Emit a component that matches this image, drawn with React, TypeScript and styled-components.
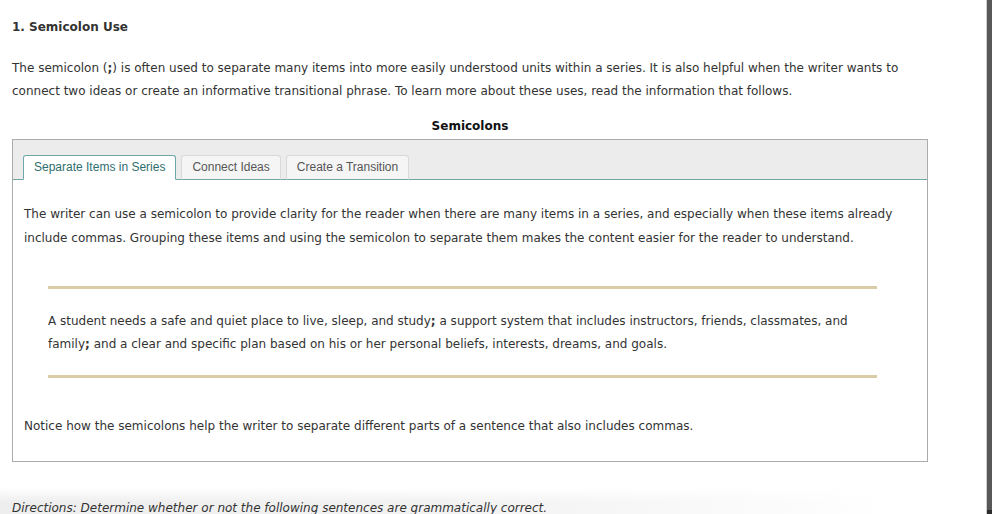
import React from "react";
import styled, { createGlobalStyle } from "styled-components";

const Global = createGlobalStyle`
  html, body { margin: 0; padding: 0; background: #fff; }
  body { font-family: "DejaVu Sans", Verdana, sans-serif; color: #333; overflow: hidden; }
  * { box-sizing: border-box; }
`;

const Frame = styled.div`
  display: flex;
  width: 992px;
  height: 514px;
  overflow: hidden;
`;

const Main = styled.main`
  flex: 1;
  display: flex;
  flex-direction: column;
  padding: 0 58px 0 12px;
  min-width: 0;
`;

const Scrollbar = styled.div`
  width: 6px;
  flex: none;
  display: flex;
  flex-direction: column;
  border-left: 1px solid #cfcfcf;
  background: #585858;
  &::after {
    content: "";
    margin-top: auto;
    height: 4px;
    background: #2c2c2c;
  }
`;

const Heading = styled.h2`
  margin: 17px 0 0;
  font-size: 12px;
  line-height: 20px;
  font-weight: bold;
  color: #333;
`;

const Para = styled.p<{ $top?: number; $lh?: number }>`
  margin: ${(p) => p.$top ?? 0}px 0 0;
  font-size: 12px;
  line-height: ${(p) => p.$lh ?? 23}px;
  color: #333;
`;

const Caption = styled.div`
  margin-top: 13px;
  text-align: center;
  font-size: 12px;
  line-height: 20px;
  font-weight: bold;
  color: #111;
`;

const Panel = styled.section`
  margin-top: 3px;
  border: 1px solid #ababab;
  display: flex;
  flex-direction: column;
`;

const TabBar = styled.div`
  display: flex;
  align-items: flex-end;
  gap: 5px;
  height: 40px;
  padding: 0 0 0 10px;
  background: #ececec;
  border-bottom: 1px solid #6fa7a7;
`;

const Tab = styled.button<{ $active?: boolean }>`
  height: 25px;
  margin-bottom: -1px;
  padding: 0 10px;
  font-family: "Liberation Sans", Arial, sans-serif;
  font-size: 12px;
  line-height: 23px;
  border: 1px solid ${(p) => (p.$active ? "#6fa7a7" : "#d9d9d9")};
  border-bottom-color: ${(p) => (p.$active ? "#fff" : "#6fa7a7")};
  border-radius: 3px 3px 0 0;
  background: ${(p) => (p.$active ? "#fff" : "#f5f5f5")};
  color: ${(p) => (p.$active ? "#2f6e6e" : "#555")};
  cursor: pointer;
`;

const Content = styled.div`
  padding: 22px 11px 23px;
`;

const Quote = styled.blockquote`
  margin: 36px 39px 0 24px;
  border-top: 3px solid #d9cda7;
  border-bottom: 3px solid #d9cda7;
  padding: 21px 0 19px;
`;

const Strong = styled.b`
  font-weight: bold;
`;

const Directions = styled.div`
  margin-top: 26px;
  flex: 1;
  margin-left: -12px;
  margin-right: -58px;
  padding: 10px 0 0 12px;
  background:
    linear-gradient(to bottom, rgba(255, 255, 255, 1) 0px, rgba(255, 255, 255, 0) 14px),
    linear-gradient(to right, #eeeeee 0%, #f2f2f2 45%, #fafafa 75%, #ffffff 90%);
`;

const Italic = styled.p`
  margin: 0;
  font-size: 12px;
  line-height: 20px;
  font-style: italic;
  color: #333;
`;

export default function App() {
  return (
    <>
      <Global />
      <Frame>
        <Main>
          <Heading>1. Semicolon Use</Heading>
          <Para $top={20}>
            The semicolon (<Strong>;</Strong>) is often used to separate many items into more easily understood units
            within a series. It is also helpful when the writer wants to connect two ideas or create an informative
            transitional phrase. To learn more about these uses, read the information that follows.
          </Para>
          <Caption>Semicolons</Caption>
          <Panel>
            <TabBar>
              <Tab $active>Separate Items in Series</Tab>
              <Tab>Connect Ideas</Tab>
              <Tab>Create a Transition</Tab>
            </TabBar>
            <Content>
              <Para $lh={24}>
                The writer can use a semicolon to provide clarity for the reader when there are many items in a
                series, and especially when these items already include commas. Grouping these items and using the
                semicolon to separate them makes the content easier for the reader to understand.
              </Para>
              <Quote>
                <Para>
                  A student needs a safe and quiet place to live, sleep, and study<Strong>;</Strong> a support system
                  that includes instructors, friends, classmates, and family<Strong>;</Strong> and a clear and specific
                  plan based on his or her personal beliefs, interests, dreams, and goals.
                </Para>
              </Quote>
              <Para $top={36} $lh={24}>
                Notice how the semicolons help the writer to separate different parts of a sentence that also includes
                commas.
              </Para>
            </Content>
          </Panel>
          <Directions>
            <Italic>Directions: Determine whether or not the following sentences are grammatically correct.</Italic>
          </Directions>
        </Main>
        <Scrollbar />
      </Frame>
    </>
  );
}
